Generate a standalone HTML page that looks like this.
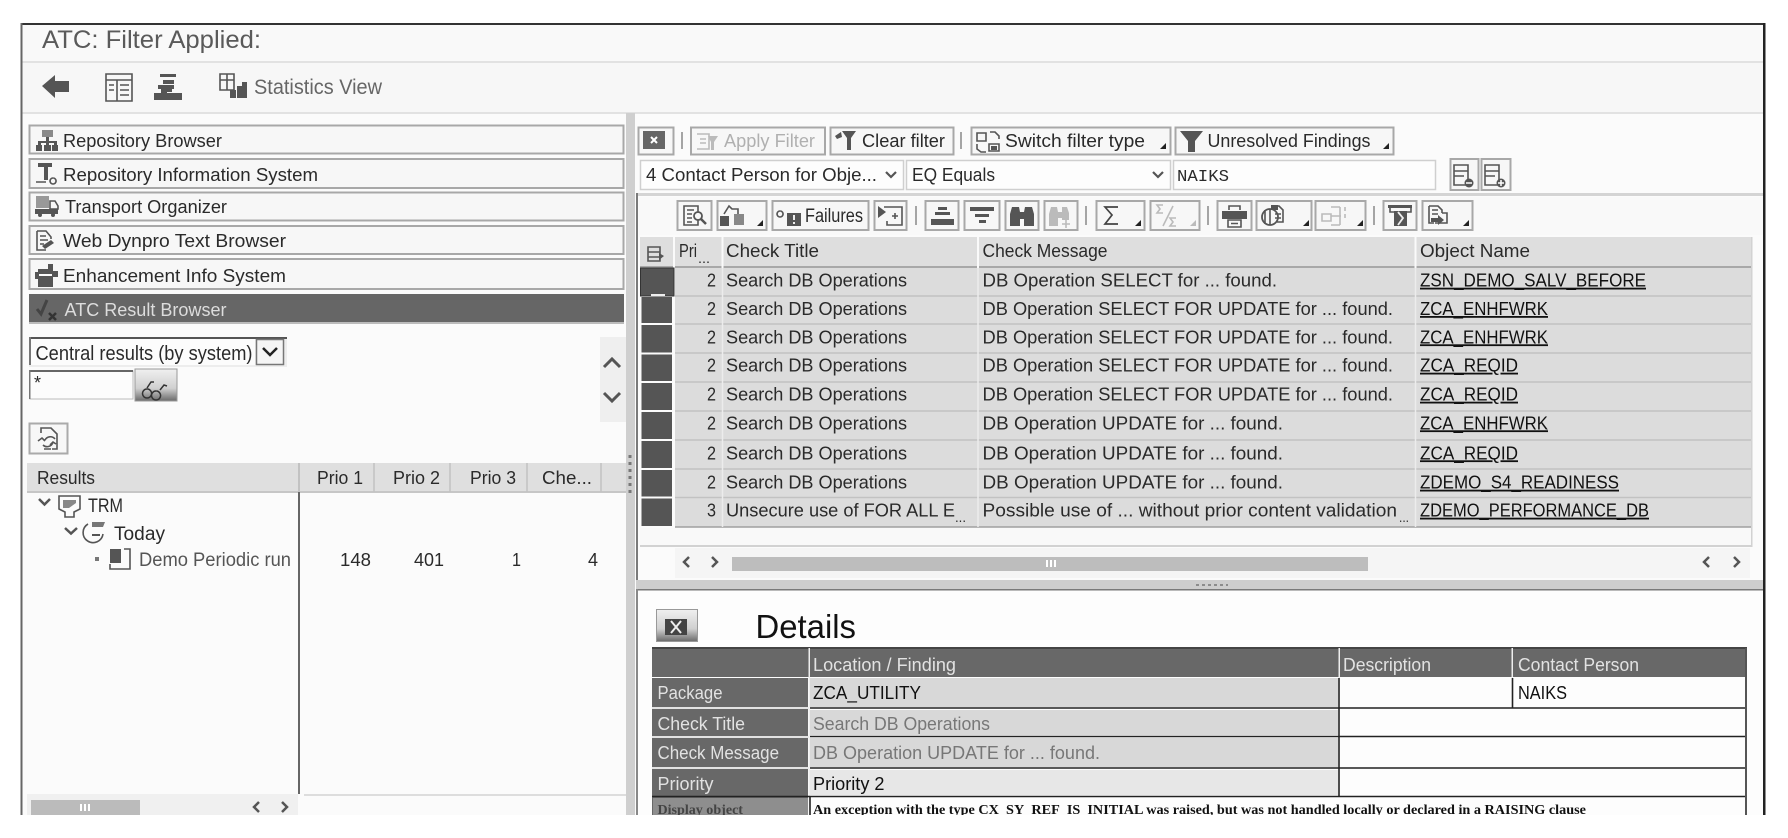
<!DOCTYPE html>
<html><head><meta charset="utf-8"><title>ATC: Filter Applied</title>
<style>
html,body{margin:0;padding:0;background:#fff;width:1788px;height:838px;overflow:hidden}
svg{display:block;filter:blur(.35px)}
text{font-family:"Liberation Sans",sans-serif;font-size:18px;fill:#2a2a2a}
.btn{fill:#f7f7f7;stroke:#a8a8a8;stroke-width:2}
.sel{fill:#555}
.sep{stroke:#a5a5a5;stroke-width:2}
.ic{fill:#555}
.ics{fill:none;stroke:#555;stroke-width:1.6}
.chev{fill:none;stroke:#555;stroke-width:3}
.u{text-decoration:underline;fill:#111}
.w{fill:#e2e2e2}
.g{fill:#777}
.dis{fill:#bbb}
.dise{fill:none;stroke:#bbb;stroke-width:1.6}
</style></head><body>
<svg width="1788" height="838" viewBox="0 0 1788 838" xmlns="http://www.w3.org/2000/svg">
<defs><linearGradient id="gb" x1="0" y1="0" x2="0" y2="1"><stop offset="0" stop-color="#f0f0f0"/><stop offset=".6" stop-color="#d0d0d0"/><stop offset="1" stop-color="#6a6a6a"/></linearGradient>
<clipPath id="cp"><rect x="0" y="0" width="1788" height="815"/></clipPath></defs>
<rect width="1788" height="838" fill="#fff"/>
<g clip-path="url(#cp)">
<rect x="21" y="24" width="1743" height="791" fill="#fbfbfb"/>
<!-- title & toolbar -->
<rect x="22" y="25" width="1741" height="37" fill="#f9f9f9"/>
<rect x="22" y="63" width="1741" height="50" fill="#f7f7f7"/>
<rect x="22" y="61" width="1741" height="2" fill="#e2e2e2"/>
<rect x="22" y="112" width="1741" height="2" fill="#e2e2e2"/>
<text x="42" y="48" style="font-size:25px;fill:#5a5a5a" textLength="219" lengthAdjust="spacingAndGlyphs">ATC: Filter Applied:</text>
<path class="ic" d="M42 86 L55 75 L55 81 L69 81 L69 92 L55 92 L55 98 Z"/>
<path class="ics" stroke-width="2" d="M106 74h26v27h-26zM106 80h26M117 80v21M120 85h9M120 90h9M120 95h9M109 85h5M109 90h5"/>
<path class="ic" d="M160 74h16v3h-16zM163 80h11v4h-11zM158 85h16v4h-16zM167 89h5v3h-5zM154 93h28v7h-28zM161 89h6v4h-6z"/>
<path class="ics" d="M220 74h14v16h-14zM220 80h14M227 74v16"/>
<path class="ic" d="M230 90h6v8h-6zM237 86h5v12h-5zM242 82h5v16h-5z"/>
<text x="254" y="94" style="font-size:21px;fill:#666" textLength="128" lengthAdjust="spacingAndGlyphs">Statistics View</text>

<!-- frame -->
<rect x="20.5" y="23" width="1744" height="2" fill="#333"/>
<rect x="20.5" y="23" width="2" height="800" fill="#666"/>
<rect x="1763" y="23" width="2.5" height="800" fill="#222"/>

<!-- left buttons -->
<rect class="btn" x="29.5" y="125.5" width="594" height="28"/>
<rect class="btn" x="29.5" y="159" width="594" height="29"/>
<rect class="btn" x="29.5" y="192.5" width="594" height="28"/>
<rect class="btn" x="29.5" y="226" width="594" height="28"/>
<rect class="btn" x="29.5" y="259" width="594" height="30"/>
<rect x="29" y="294" width="595" height="28" fill="#666"/><rect x="29" y="322" width="595" height="2" fill="#bbb"/>
<text x="63" y="147" textLength="159" lengthAdjust="spacingAndGlyphs">Repository Browser</text>
<text x="63" y="181" textLength="255" lengthAdjust="spacingAndGlyphs">Repository Information System</text>
<text x="65" y="213" textLength="162" lengthAdjust="spacingAndGlyphs">Transport Organizer</text>
<text x="63" y="247" textLength="223" lengthAdjust="spacingAndGlyphs">Web Dynpro Text Browser</text>
<text x="63" y="282" textLength="223" lengthAdjust="spacingAndGlyphs">Enhancement Info System</text>
<text x="64.5" y="316" style="fill:#ddd" textLength="162" lengthAdjust="spacingAndGlyphs">ATC Result Browser</text>
<!-- left button icons -->
<path fill="#8a8a8a" d="M42 130h11v7h-11z"/><path class="ic" d="M46 137h3v4h-3zM38 141h19v2h-19zM38 143h3v2h-3zM46 143h3v2h-3zM54 143h3v2h-3zM36 145h6v6h-6zM44 145h7v6h-7zM52 145h6v6h-6z"/>
<path class="ic" d="M38 163h14v4h-4v13h-4v-13h-6z"/><path class="ics" stroke-width="2" d="M36 182h10M53 178a3 3 0 1 0 0.1 0"/>
<path fill="#999" d="M36 196h13v12h-13z"/><path class="ic" d="M35 209h23v5h-23z"/><path class="ics" d="M50 201h5l3 5v3h-8z"/><circle cx="40" cy="215" r="2" fill="#555"/><circle cx="53" cy="215" r="2" fill="#555"/>
<path class="ics" d="M37 231h9l5 6v2M37 231v19h9M40 236h6M40 240h8M40 244h4"/><path class="ic" d="M42 246l9-6 3 3-9 6z"/>
<path class="ic" d="M48 264h5v7h5v6h-5v10h-15v-8h-3v-7h3v-3h10z"/>
<path fill="#fafafa" d="M39 274h13v2h-13z"/>
<path fill="none" stroke="#444" stroke-width="3" d="M37 309l4 5 6-14"/><path stroke="#333" stroke-width="2.5" d="M49 313l7 7M56 313l-7 7"/>

<!-- dropdown -->
<rect x="29" y="337" width="258" height="30" fill="#ededed"/>
<rect x="30" y="339" width="225" height="26" fill="#fcfcfc"/>
<rect x="29" y="337" width="258" height="2" fill="#555"/>
<rect x="29" y="337" width="2" height="28" fill="#777"/>
<rect x="256.5" y="339.5" width="27" height="25" fill="#f5f5f5" stroke="#777" stroke-width="1.5"/>
<path d="M263 348l7 7 7-7" fill="none" stroke="#222" stroke-width="2.5"/>
<text x="35.5" y="360" style="font-size:20px" textLength="217" lengthAdjust="spacingAndGlyphs">Central results (by system)</text>
<rect x="30" y="371" width="103" height="28" fill="#fcfcfc" stroke="#bbb" stroke-width="1"/>
<rect x="29" y="370" width="104" height="2" fill="#666"/><rect x="29" y="370" width="1.5" height="29" fill="#777"/>
<text x="34" y="389" style="font-size:18px">*</text>
<rect x="135" y="369" width="42" height="32" fill="url(#gb)" stroke="#999"/>
<path d="M147 389a4.500 4.500 0 1 0 0.1 0M156 391a4.500 4.500 0 1 0 0.1 0M147 388l4-6 3 0M160 390l4-5 3 1" fill="none" stroke="#333" stroke-width="1.5"/>
<rect x="600" y="337" width="26" height="85" fill="#efefef"/>
<path class="chev" d="M604 367l8-8 8 8M604 393l8 8 8-8"/>
<rect x="29.5" y="423.500" width="38" height="30" fill="#f7f7f7" stroke="#aaa" stroke-width="2"/>
<path class="ics" d="M41 433v-5h10l6 6v15h-5M45 440a6 6 0 0 1 10 -1M38 441l4-3 3 3M53 442a6 6 0 0 1 -10 3M56 444l-3-2-3 3M44 449h7"/>

<!-- results table -->
<rect x="27" y="463" width="599" height="29" fill="#dfdfdf"/>
<rect x="27" y="491" width="599" height="2" fill="#c6c6c6"/>
<path stroke="#c2c2c2" stroke-width="1.500" d="M374 463v29M450 463v29M527 463v29M601 463v29"/>
<text x="37" y="484" textLength="58" lengthAdjust="spacingAndGlyphs">Results</text>
<text x="317" y="484" textLength="46" lengthAdjust="spacingAndGlyphs">Prio 1</text>
<text x="393" y="484" textLength="47" lengthAdjust="spacingAndGlyphs">Prio 2</text>
<text x="470" y="484" textLength="46" lengthAdjust="spacingAndGlyphs">Prio 3</text>
<text x="542" y="484" textLength="50" lengthAdjust="spacingAndGlyphs">Che...</text>
<rect x="298" y="463" width="2" height="331" fill="#666"/>
<rect x="298" y="463" width="2" height="29" fill="#c2c2c2"/>
<path d="M39 499l5.500 5.500 5.500-5.500M65 528l6 5.500 6-5.500" fill="none" stroke="#555" stroke-width="2.500"/>
<path class="ics" d="M59 496h21v13l-6 3v5h-9v-5l-6-3z"/><path fill="#888" d="M63 500h13v3l-7 5h-6z"/>
<text x="88" y="512" style="font-size:19px" textLength="35" lengthAdjust="spacingAndGlyphs">TRM</text>
<path class="ics" stroke-width="2" d="M88 524a10 10 0 1 0 15 10"/><path fill="#777" d="M92 522h13l-2 5h-11z"/><path class="ic" d="M92 534h8v2h-8z"/>
<text x="114" y="540" style="font-size:19px" textLength="51" lengthAdjust="spacingAndGlyphs">Today</text>
<rect x="95" y="557" width="4" height="4" fill="#777"/>
<path class="ic" d="M110 549h11v14h-11z"/><path class="ics" d="M124 549h6v20h-20v-5"/>
<text x="139" y="566" style="font-size:19px;fill:#555" textLength="152" lengthAdjust="spacingAndGlyphs">Demo Periodic run</text>
<text x="340" y="566" textLength="31" lengthAdjust="spacingAndGlyphs">148</text>
<text x="414" y="566" textLength="30" lengthAdjust="spacingAndGlyphs">401</text>
<text x="512" y="566" textLength="9" lengthAdjust="spacingAndGlyphs">1</text>
<text x="588" y="566" textLength="10" lengthAdjust="spacingAndGlyphs">4</text>
<rect x="27" y="794" width="271" height="21" fill="#f0f0f0"/>
<rect x="304" y="794" width="322" height="2" fill="#ddd"/>
<rect x="31" y="800" width="109" height="15" fill="#bbb"/>
<path stroke="#fff" stroke-width="2" d="M81 804v7M85 804v7M89 804v7"/>
<path d="M259 802l-5 5 5 5M282 802l5 5-5 5" fill="none" stroke="#555" stroke-width="2.500"/>

<!-- sash -->
<rect x="626" y="113" width="9" height="702" fill="#cfcfcf"/>
<path stroke="#777" stroke-width="3" stroke-dasharray="3 4" d="M630 455v42"/>

<!-- right filter bar -->
<rect x="636" y="114" width="1127" height="79" fill="#fbfbfb"/>
<rect class="btn" x="638.500" y="127.500" width="35" height="27"/>
<rect x="643" y="131" width="22" height="18" fill="#666"/><path stroke="#fff" stroke-width="2" d="M651 137l6 6M657 137l-6 6"/>
<path class="sep" d="M682 132v17M961 132v17"/>
<rect class="btn" x="691" y="127.500" width="134" height="27"/>
<path class="dise" d="M697 134h12v15h-12M700 139h6M700 143h6"/><path class="dis" d="M708 136h10l-4 6v8h-3v-8z"/>
<text x="724" y="147" textLength="91" lengthAdjust="spacingAndGlyphs" style="fill:#b0b0b0">Apply Filter</text>
<rect class="btn" x="830.500" y="127.500" width="123" height="27"/>
<path class="ic" d="M842 131h14l-5 7v12h-4v-12zM835 136l6-4 1 5-5 2z"/>
<text x="862" y="147" textLength="83" lengthAdjust="spacingAndGlyphs">Clear filter</text>
<rect class="btn" x="971.500" y="127.500" width="199" height="27"/>
<path class="ics" d="M977 133h9v8h-9zM989 144h10v7h-10zM990 132h5l4 4v3M977 144v5l4 3h5"/>
<path class="ic" d="M991 146h6v4h-6z"/>
<text x="1005" y="147" textLength="140" lengthAdjust="spacingAndGlyphs">Switch filter type</text>
<path fill="#222" d="M1166 143v6h-6z"/>
<rect class="btn" x="1175.500" y="127.500" width="218" height="27"/>
<path class="ic" d="M1180 131h23l-8 10v11h-7v-11z"/>
<text x="1207.500" y="147" textLength="163" lengthAdjust="spacingAndGlyphs">Unresolved Findings</text>
<path fill="#222" d="M1389 143v6h-6z"/>
<rect x="640.500" y="160.500" width="263" height="29" fill="#fdfdfd" stroke="#cfcfcf" stroke-width="1.500"/>
<text x="646" y="181" textLength="231" lengthAdjust="spacingAndGlyphs">4 Contact Person for Obje...</text>
<path d="M886 172l5 5 5-5" fill="none" stroke="#555" stroke-width="2.200"/>
<rect x="906.500" y="160.500" width="264" height="29" fill="#fdfdfd" stroke="#cfcfcf" stroke-width="1.500"/>
<text x="912" y="181" textLength="83" lengthAdjust="spacingAndGlyphs">EQ Equals</text>
<path d="M1153 172l5 5 5-5" fill="none" stroke="#555" stroke-width="2.200"/>
<rect x="1173.500" y="160.500" width="262" height="29" fill="#fdfdfd" stroke="#cfcfcf" stroke-width="1.500"/>
<text x="1177" y="181" style="font-family:'Liberation Mono',monospace;font-size:17px" textLength="52" lengthAdjust="spacingAndGlyphs">NAIKS</text>
<rect class="btn" x="1450.500" y="159" width="28" height="31"/>
<rect class="btn" x="1481.500" y="159" width="29" height="31"/>
<path class="ics" d="M1454 165h14v20h-14zM1454 171h14M1454 176h10"/><circle cx="1469" cy="183" r="4.500" fill="#555"/><path stroke="#fff" stroke-width="1.500" d="M1466 183h6"/>
<path class="ics" d="M1485 165h14v20h-14zM1485 171h14M1485 176h10"/><circle cx="1501" cy="183" r="4.500" fill="#555"/><path stroke="#fff" stroke-width="1.500" d="M1498 183h6M1501 180v6"/>

<!-- ALV pane -->
<rect x="636" y="193" width="1127" height="3" fill="#d4d4d4"/>
<rect x="636" y="193" width="2" height="389" fill="#7a7a7a"/>
<rect x="639" y="196" width="1124" height="384" fill="#fbfbfb"/>
<rect x="639" y="197" width="1124" height="38" fill="#f9f9f9"/>
<g>
<rect class="btn" x="677.500" y="201" width="34" height="29"/>
<path class="ics" d="M684 206h14v19h-14zM687 210h7M687 214h5M687 218h5M687 222h5"/><circle cx="698" cy="216" r="4" fill="#f7f7f7" stroke="#555" stroke-width="1.800"/><path stroke="#555" stroke-width="2.500" d="M701 219l5 5"/>
<rect class="btn" x="717.500" y="201" width="49" height="29"/>
<path class="ic" d="M720 216h9v10h-9z"/><path fill="#888" d="M734 214h10v11h-10z"/><path class="ics" d="M724 214l5-8 3 3h6v5"/><path fill="#222" d="M763 220v6h-6z"/>
<rect class="btn" x="772.500" y="201" width="96" height="29"/>
<path class="ics" stroke-width="3" d="M780 211a3 3 0 1 0 0.1 0"/><path class="ic" d="M787 213h14v13h-14z"/><path fill="#eee" d="M793 215h2v5h-2zM793 222h2v2h-2z"/>
<text x="805" y="222" style="font-size:19px" textLength="58" lengthAdjust="spacingAndGlyphs">Failures</text>
<rect class="btn" x="874.500" y="201" width="32" height="29"/>
<path class="ics" d="M884 207h18v18h-15v-4M892 216h6M895 213v6"/><path class="ic" d="M878 206l8 6-8 6z"/>
<path class="sep" d="M916 206v19M1086 206v19M1208 206v19M1374 206v19"/>
<rect class="btn" x="925.500" y="201" width="33" height="29"/>
<path class="ic" d="M938 207h9v3h-9zM935 212h15v3h-15zM931 219h23v6h-23z"/>
<rect class="btn" x="964.500" y="201" width="35" height="29"/>
<path class="ic" d="M970 207h24v4h-24zM975 214h14v3h-14zM979 220h7v3h-7z"/>
<rect class="btn" x="1005.500" y="201" width="33" height="29"/>
<path class="ic" d="M1012 207h7l1 5v14h-10v-12zM1025 207h7l2 7v12h-10v-14z"/><path class="ic" d="M1019 212h6v7h-6z"/>
<rect class="btn" x="1044.500" y="201" width="33" height="29"/>
<path class="dis" d="M1051 207h6l1 5v14h-9v-12zM1062 207h5l2 6v7h-7zM1058 212h4v6h-4z"/><path class="dise" d="M1066 220v8M1062 224h8"/>
<rect class="btn" x="1096.500" y="201" width="48" height="29"/>
<path fill="none" stroke="#444" stroke-width="1.700" d="M1118 207h-13l7 8-7 9h13"/><path fill="#222" d="M1141 220v6h-6z"/>
<rect class="btn" x="1150.500" y="201" width="49" height="29"/>
<path class="dise" d="M1163 205h-6l3 4-3 4h6M1173 206l-10 20M1176 218h-6l3 4-3 4h6"/><path fill="#bbb" d="M1196 220v6h-6z"/>
<rect class="btn" x="1217.500" y="201" width="34" height="29"/>
<path class="ics" d="M1229 210v-4h11v4"/><path class="ic" d="M1222 211h25v8h-25z"/><path class="ics" d="M1228 220h13v7h-13zM1231 223.500h7"/>
<rect class="btn" x="1256.500" y="201" width="55" height="29"/>
<circle cx="1270" cy="217" r="8" fill="none" stroke="#555" stroke-width="1.800"/><path class="ics" d="M1265 210v14M1270 209v16M1275 206h4l4 4v12h-6M1275 214h6M1275 218h6"/><path class="ic" d="M1271 205h7v5h-7z"/><path fill="#222" d="M1309 220v6h-6z"/>
<rect class="btn" x="1315.500" y="201" width="50" height="29"/>
<path class="dise" d="M1322 214h9v7h-9zM1331 207h9M1340 207v18M1331 225h9M1331 216h10M1345 207v4M1345 214v4"/><path fill="#222" d="M1363 220v6h-6z"/>
<rect class="btn" x="1383.500" y="201" width="33" height="29"/>
<path class="ic" d="M1388 205h24v3h-24zM1394 211h13v15h-13z"/><path class="ics" d="M1390 208v4h4M1411 208v4h-4"/><path fill="none" stroke="#eee" stroke-width="1.800" d="M1398 212l5 6-5 7"/>
<rect class="btn" x="1422.500" y="201" width="50" height="29"/>
<path class="ics" d="M1429 206h9l4 4v3M1429 206v17h5M1432 210h6M1432 214h6M1435 223h12v-10h-5"/><path class="ic" d="M1431 218h7v-3l6 5-6 5v-3h-7z"/><path fill="#222" d="M1469 220v6h-6z"/>
</g>

<!-- ALV header -->
<rect x="640" y="237" width="1111" height="30" fill="#dedede"/>
<rect x="640" y="266" width="1111" height="2" fill="#a8a8a8"/>
<path stroke="#fafafa" stroke-width="2" d="M674 237v31M722.500 237v31M978 237v31M1415.500 237v31"/>
<path class="ics" d="M648 247h12v14h-12zM648 252h12M648 257h12"/><path class="ic" d="M659 253l5 3-5 4z"/>
<text x="679" y="257" textLength="18" lengthAdjust="spacingAndGlyphs">Pri</text>
<text x="698" y="263" style="font-size:14px" textLength="12" lengthAdjust="spacingAndGlyphs">...</text>
<text x="726" y="257" textLength="93" lengthAdjust="spacingAndGlyphs">Check Title</text>
<text x="982.500" y="257" textLength="125" lengthAdjust="spacingAndGlyphs">Check Message</text>
<text x="1420" y="257" textLength="110" lengthAdjust="spacingAndGlyphs">Object Name</text>

<!-- ALV rows -->
<rect x="675" y="268" width="1076" height="259" fill="#dcdcdc"/>
<path stroke="#c2c2c2" stroke-width="1.500" d="M675 296h1076M675 324h1076M675 353h1076M675 382h1076M675 411h1076M675 440h1076M675 469h1076M675 497.500h1076"/>
<path stroke="#a0a0a0" stroke-width="1.500" d="M675 527h1076"/>
<path stroke="#ececec" stroke-width="1.500" d="M722.500 268v259M978 268v259M1415.500 268v259"/>
<rect x="640.500" y="268" width="33.500" height="28" fill="#555" stroke="#333"/><rect x="651" y="294" width="14" height="2" fill="#eee"/>
<rect x="641.500" y="297" width="30.500" height="26" class="sel"/><rect x="641.500" y="325" width="30.500" height="27.500" class="sel"/><rect x="641.500" y="354.500" width="30.500" height="26.500" class="sel"/><rect x="641.500" y="383" width="30.500" height="27" class="sel"/><rect x="641.500" y="412" width="30.500" height="27" class="sel"/><rect x="641.500" y="441" width="30.500" height="27" class="sel"/><rect x="641.500" y="470" width="30.500" height="26.500" class="sel"/><rect x="641.500" y="498.500" width="30.500" height="27.500" class="sel"/>

<text x="707" y="286.700" textLength="9" lengthAdjust="spacingAndGlyphs">2</text><text x="726" y="286.700" textLength="181" lengthAdjust="spacingAndGlyphs">Search DB Operations</text><text x="982.500" y="286.700" textLength="294.500" lengthAdjust="spacingAndGlyphs">DB Operation SELECT for ... found.</text><text x="1420" y="286.700" class="u" textLength="226" lengthAdjust="spacingAndGlyphs">ZSN_DEMO_SALV_BEFORE</text>
<text x="707" y="315" textLength="9" lengthAdjust="spacingAndGlyphs">2</text><text x="726" y="315" textLength="181" lengthAdjust="spacingAndGlyphs">Search DB Operations</text><text x="982.500" y="315" textLength="410.500" lengthAdjust="spacingAndGlyphs">DB Operation SELECT FOR UPDATE for ... found.</text><text x="1420" y="315" class="u" textLength="128" lengthAdjust="spacingAndGlyphs">ZCA_ENHFWRK</text>
<text x="707" y="343.300" textLength="9" lengthAdjust="spacingAndGlyphs">2</text><text x="726" y="343.300" textLength="181" lengthAdjust="spacingAndGlyphs">Search DB Operations</text><text x="982.500" y="343.300" textLength="410.500" lengthAdjust="spacingAndGlyphs">DB Operation SELECT FOR UPDATE for ... found.</text><text x="1420" y="343.300" class="u" textLength="128" lengthAdjust="spacingAndGlyphs">ZCA_ENHFWRK</text>
<text x="707" y="371.700" textLength="9" lengthAdjust="spacingAndGlyphs">2</text><text x="726" y="371.700" textLength="181" lengthAdjust="spacingAndGlyphs">Search DB Operations</text><text x="982.500" y="371.700" textLength="410.500" lengthAdjust="spacingAndGlyphs">DB Operation SELECT FOR UPDATE for ... found.</text><text x="1420" y="371.700" class="u" textLength="98" lengthAdjust="spacingAndGlyphs">ZCA_REQID</text>
<text x="707" y="400.700" textLength="9" lengthAdjust="spacingAndGlyphs">2</text><text x="726" y="400.700" textLength="181" lengthAdjust="spacingAndGlyphs">Search DB Operations</text><text x="982.500" y="400.700" textLength="410.500" lengthAdjust="spacingAndGlyphs">DB Operation SELECT FOR UPDATE for ... found.</text><text x="1420" y="400.700" class="u" textLength="98" lengthAdjust="spacingAndGlyphs">ZCA_REQID</text>
<text x="707" y="429.300" textLength="9" lengthAdjust="spacingAndGlyphs">2</text><text x="726" y="429.300" textLength="181" lengthAdjust="spacingAndGlyphs">Search DB Operations</text><text x="982.500" y="429.300" textLength="300.500" lengthAdjust="spacingAndGlyphs">DB Operation UPDATE for ... found.</text><text x="1420" y="429.300" class="u" textLength="128" lengthAdjust="spacingAndGlyphs">ZCA_ENHFWRK</text>
<text x="707" y="459.300" textLength="9" lengthAdjust="spacingAndGlyphs">2</text><text x="726" y="459.300" textLength="181" lengthAdjust="spacingAndGlyphs">Search DB Operations</text><text x="982.500" y="459.300" textLength="300.500" lengthAdjust="spacingAndGlyphs">DB Operation UPDATE for ... found.</text><text x="1420" y="459.300" class="u" textLength="98" lengthAdjust="spacingAndGlyphs">ZCA_REQID</text>
<text x="707" y="488.700" textLength="9" lengthAdjust="spacingAndGlyphs">2</text><text x="726" y="488.700" textLength="181" lengthAdjust="spacingAndGlyphs">Search DB Operations</text><text x="982.500" y="488.700" textLength="300.500" lengthAdjust="spacingAndGlyphs">DB Operation UPDATE for ... found.</text><text x="1420" y="488.700" class="u" textLength="199" lengthAdjust="spacingAndGlyphs">ZDEMO_S4_READINESS</text>
<text x="707" y="516.700" textLength="9" lengthAdjust="spacingAndGlyphs">3</text><text x="726" y="516.700" textLength="229" lengthAdjust="spacingAndGlyphs">Unsecure use of FOR ALL E</text><text x="955" y="522" style="font-size:14px" textLength="11" lengthAdjust="spacingAndGlyphs">...</text><text x="982.500" y="516.700" textLength="414.500" lengthAdjust="spacingAndGlyphs">Possible use of ... without prior content validation</text><text x="1399" y="522" style="font-size:14px" textLength="10" lengthAdjust="spacingAndGlyphs">...</text><text x="1420" y="516.700" class="u" textLength="229" lengthAdjust="spacingAndGlyphs">ZDEMO_PERFORMANCE_DB</text>

<rect x="640" y="528" width="1112" height="18" fill="#f9f9f9"/>
<rect x="640" y="545" width="1112" height="2" fill="#d2d2d2"/>
<rect x="1751" y="237" width="1.500" height="310" fill="#d2d2d2"/>
<!-- h scroll -->
<rect x="675" y="548" width="1075" height="30" fill="#f5f5f5"/>
<rect x="732" y="557" width="636" height="14" fill="#bdbdbd"/>
<path stroke="#fff" stroke-width="2" d="M1047 560v7M1051 560v7M1055 560v7"/>
<path d="M689 557l-5 5 5 5M712 557l5 5-5 5M1709 557l-5 5 5 5M1734 557l5 5-5 5" fill="none" stroke="#555" stroke-width="2.500"/>
<!-- h sash -->
<rect x="636" y="580" width="1127" height="9" fill="#cecece"/>
<rect x="636" y="589" width="1127" height="1.500" fill="#7a7a7a"/>
<path stroke="#777" stroke-width="1.500" stroke-dasharray="3 3" d="M1196 585h32"/>

<!-- details -->
<rect x="638" y="591" width="1125" height="224" fill="#fdfdfd"/>
<rect x="636" y="589" width="2" height="226" fill="#888"/>
<rect x="656.500" y="609.500" width="41" height="32" fill="url(#gb)" stroke="#999"/>
<rect x="665" y="619" width="22" height="16" fill="#444"/><path stroke="#eee" stroke-width="2" d="M671 621l10 12M681 621l-10 12"/>
<text x="755.500" y="638" style="font-size:33px;fill:#111" textLength="100.500" lengthAdjust="spacingAndGlyphs">Details</text>
<!-- details table -->
<rect x="652" y="648" width="1095" height="29" fill="#686868"/>
<rect x="652" y="647" width="1095" height="2" fill="#444"/>
<rect x="652" y="678" width="156" height="137" fill="#686868"/>
<rect x="652" y="707" width="157" height="2" fill="#e2e2e2"/><rect x="652" y="736" width="157" height="2" fill="#e2e2e2"/><rect x="652" y="767" width="157" height="2" fill="#e2e2e2"/>
<rect x="810" y="678" width="528" height="29" fill="#d8d8d8"/>
<rect x="810" y="710" width="528" height="25" fill="#d8d8d8"/>
<rect x="810" y="738" width="528" height="29" fill="#d8d8d8"/>
<rect x="810" y="770" width="528" height="25" fill="#e7e7e7"/>
<rect x="808.500" y="648" width="1.500" height="167" fill="#eee"/>
<rect x="1338.500" y="648" width="1.500" height="30" fill="#eee"/><rect x="1511.500" y="648" width="1.500" height="30" fill="#eee"/>
<path stroke="#222" stroke-width="1.600" d="M810 708h936M810 736.500h936M810 768h936M652 796.500h1094M1339 678v118M1512.500 678v30M810 796v19"/>
<rect x="1745" y="648" width="2" height="167" fill="#555"/>
<rect x="653" y="798" width="155" height="17" fill="#8e8e8e"/>
<text x="813" y="671" class="w" textLength="143" lengthAdjust="spacingAndGlyphs">Location / Finding</text>
<text x="1343" y="671" class="w" textLength="88" lengthAdjust="spacingAndGlyphs">Description</text>
<text x="1518" y="671" class="w" textLength="121" lengthAdjust="spacingAndGlyphs">Contact Person</text>
<text x="657.500" y="699" class="w" textLength="65" lengthAdjust="spacingAndGlyphs">Package</text>
<text x="657.500" y="730" class="w" textLength="87.500" lengthAdjust="spacingAndGlyphs">Check Title</text>
<text x="657.500" y="759" class="w" textLength="121.500" lengthAdjust="spacingAndGlyphs">Check Message</text>
<text x="657.500" y="790" class="w" textLength="56" lengthAdjust="spacingAndGlyphs">Priority</text>
<text x="813" y="699" style="fill:#111" textLength="108" lengthAdjust="spacingAndGlyphs">ZCA_UTILITY</text>
<text x="813" y="730" class="g" textLength="177" lengthAdjust="spacingAndGlyphs">Search DB Operations</text>
<text x="813" y="759" class="g" textLength="287" lengthAdjust="spacingAndGlyphs">DB Operation UPDATE for ... found.</text>
<text x="813" y="790" style="fill:#111" textLength="71.500" lengthAdjust="spacingAndGlyphs">Priority 2</text>
<text x="1518" y="699" style="fill:#111" textLength="49" lengthAdjust="spacingAndGlyphs">NAIKS</text>
<text x="657.500" y="814" style="font-family:'Liberation Serif',serif;font-size:14px;font-weight:bold;fill:#444" textLength="85.500" lengthAdjust="spacingAndGlyphs">Display object</text>
<text x="813" y="814" style="font-family:'Liberation Serif',serif;font-size:14px;font-weight:bold;fill:#111" textLength="773" lengthAdjust="spacingAndGlyphs">An exception with the type CX_SY_REF_IS_INITIAL was raised, but was not handled locally or declared in a RAISING clause</text>
</g>
</svg>
</body></html>
